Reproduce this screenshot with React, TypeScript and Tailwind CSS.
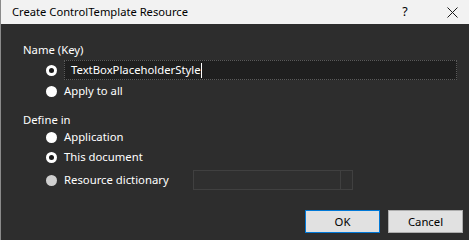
import React from "react";

const font = { fontFamily: '"Segoe UI", "Noto Sans", "Open Sans", sans-serif' };

function Radio({ kind }: { kind: "on" | "off" | "disabled" }) {
  if (kind === "on") {
    return (
      <div className="w-[11px] h-[11px] rounded-full bg-white flex items-center justify-center">
        <div className="w-[5px] h-[5px] rounded-full bg-[#1a1a1a]" />
      </div>
    );
  }
  if (kind === "disabled") {
    return <div className="w-[11px] h-[11px] rounded-full bg-[#cfcfcf]" />;
  }
  return <div className="w-[11px] h-[11px] rounded-full bg-white" />;
}

export default function App() {
  return (
    <div
      className="w-[469px] h-[240px] bg-[#2d2d2d] border-l border-[#8a8a8a] flex flex-col text-[11.3px] overflow-hidden"
      style={font}
    >
      <div className="h-[24px] bg-[#f2f2f2] flex items-center shrink-0">
        <div className="pl-[11px] text-black leading-[16px] text-[11.2px]">Create ControlTemplate Resource</div>
        <div className="ml-auto w-[24px] mr-[18px] text-center text-black text-[12.5px]">?</div>
        <div className="w-[34px] flex items-center justify-center">
          <svg width="11" height="11" viewBox="0 0 11 11">
            <path d="M0.5 0.5 L10.5 10.5 M10.5 0.5 L0.5 10.5" stroke="#1a1a1a" strokeWidth="1" />
          </svg>
        </div>
      </div>
      <div className="flex flex-col text-white">
        <div className="mt-[18px] pl-[22px] leading-[16px]">Name (Key)</div>
        <div className="mt-[2px] flex items-center pl-[45px] h-[20px]">
          <Radio kind="on" />
          <div className="ml-[7px] w-[393px] h-[20px] bg-[#1f1f1f] border border-dotted border-[#5a5a5a] flex items-center pl-[6px] leading-[16px]">
            <span>TextBoxPlaceholderStyle</span>
            <span className="w-[1px] h-[15px] bg-white" />
          </div>
        </div>
        <div className="mt-[3px] flex items-center pl-[45px] h-[16px]">
          <Radio kind="off" />
          <span className="ml-[7px] leading-[16px]">Apply to all</span>
        </div>
        <div className="mt-[13px] pl-[22px] leading-[16px]">Define in</div>
        <div className="mt-[1px] flex items-center pl-[45px] h-[16px]">
          <Radio kind="off" />
          <span className="ml-[7px] leading-[16px]">Application</span>
        </div>
        <div className="mt-[4px] flex items-center pl-[45px] h-[16px]">
          <Radio kind="on" />
          <span className="ml-[7px] leading-[16px]">This document</span>
        </div>
        <div className="mt-[5px] flex items-center pl-[45px] h-[20px]">
          <Radio kind="disabled" />
          <span className="ml-[7px] leading-[16px] w-[129px]">Resource dictionary</span>
          <div className="w-[160px] h-[20px] border border-[#404040] bg-[#2f2f2f] flex">
            <div className="flex-1" />
            <div className="w-[12px] border-l border-[#404040]" />
          </div>
        </div>
        <div className="mt-[20px] flex justify-end pr-[6px] gap-[8px]">
          <div className="w-[75px] h-[23px] bg-[#e1e1e1] border border-[#0078d7] text-black flex items-center justify-center leading-[16px]">
            OK
          </div>
          <div className="w-[75px] h-[23px] bg-[#e1e1e1] border border-[#adadad] text-black flex items-center justify-center leading-[16px]">
            Cancel
          </div>
        </div>
      </div>
    </div>
  );
}
